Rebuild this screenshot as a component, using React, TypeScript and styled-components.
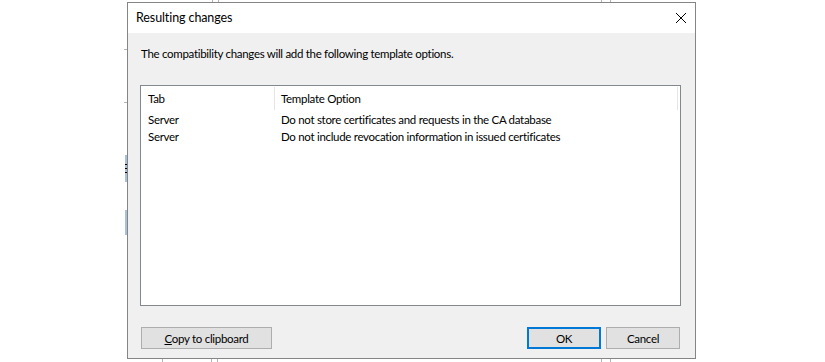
import styled, { createGlobalStyle } from "styled-components";

const GlobalStyle = createGlobalStyle`
  html, body {
    margin: 0;
    padding: 0;
    background: #fff;
  }
  body {
    font-family: Lato, "Liberation Sans", sans-serif;
    font-size: 11.5px;
    letter-spacing: -0.3px;
    color: #000;
  }
`;

interface Row {
  tab: string;
  option: string;
}

const rows: Row[] = [
  { tab: "Server", option: "Do not store certificates and requests in the CA database" },
  { tab: "Server", option: "Do not include revocation information in issued certificates" },
];

// bits of the window that sits behind the dialog
function Backdrop() {
  return (
    <BackdropSvg width="825" height="362" viewBox="0 0 825 362">
      <g stroke="#b4b4b4" strokeWidth="1">
        <line x1="212.5" y1="0" x2="212.5" y2="3" />
        <line x1="218.5" y1="0" x2="218.5" y2="3" />
        <line x1="601.5" y1="0" x2="601.5" y2="3" />
        <line x1="610.5" y1="0" x2="610.5" y2="3" />
        <line x1="162.5" y1="358" x2="162.5" y2="362" />
        <line x1="211.5" y1="358" x2="211.5" y2="362" />
        <line x1="217.5" y1="358" x2="217.5" y2="362" />
        <line x1="601.5" y1="358" x2="601.5" y2="362" />
        <line x1="610.5" y1="358" x2="610.5" y2="362" />
        <line x1="124" y1="49.5" x2="127" y2="49.5" />
        <line x1="124" y1="102.5" x2="127" y2="102.5" />
      </g>
      <rect x="125" y="155" width="2" height="27" fill="#a7c0dc" />
      <rect x="125" y="210" width="2" height="25" fill="#a7c0dc" />
      <g stroke="#000" strokeWidth="1">
        <line x1="125" y1="164.5" x2="127" y2="164.5" />
        <line x1="125" y1="168.5" x2="127" y2="168.5" />
        <line x1="125" y1="172.5" x2="127" y2="172.5" />
      </g>
    </BackdropSvg>
  );
}

function CloseIcon() {
  return (
    <svg width="12" height="12" viewBox="0 0 12 12">
      <path d="M1 1 L11 11 M11 1 L1 11" stroke="#000" strokeWidth="1" fill="none" />
    </svg>
  );
}

export default function App() {
  return (
    <>
      <GlobalStyle />
      <Desktop>
        <Backdrop />
        <Dialog>
          <TitleBar>
            <Title>Resulting changes</Title>
            <CloseButton>
              <CloseIcon />
            </CloseButton>
          </TitleBar>
          <Body>
            <Message>The compatibility changes will add the following template options.</Message>
            <ListView>
              <HeaderRow>
                <HeaderCell $divider>Tab</HeaderCell>
                <HeaderCell $divider>Template Option</HeaderCell>
              </HeaderRow>
              {rows.map((row, i) => (
                <ItemRow key={i}>
                  <Cell>{row.tab}</Cell>
                  <Cell>{row.option}</Cell>
                </ItemRow>
              ))}
            </ListView>
            <Footer>
              <Button $wide>
                <u>C</u>opy to clipboard
              </Button>
              <ButtonGroup>
                <Button $default>OK</Button>
                <Button>Cancel</Button>
              </ButtonGroup>
            </Footer>
          </Body>
        </Dialog>
      </Desktop>
    </>
  );
}

const Desktop = styled.div`
  position: relative;
  width: 825px;
  height: 362px;
  overflow: hidden;
  background: #fff;
`;

const BackdropSvg = styled.svg`
  position: absolute;
  left: 0;
  top: 0;
`;

const Dialog = styled.div`
  position: absolute;
  left: 127px;
  top: 2px;
  width: 567px;
  height: 355px;
  border: 1px solid #858585;
  display: flex;
  flex-direction: column;
  background: #f0f0f0;
`;

const TitleBar = styled.div`
  height: 30px;
  background: #fff;
  display: flex;
  align-items: center;
  justify-content: space-between;
  padding-left: 8px;
`;

const Title = styled.span`
  font-size: 12.5px;
  letter-spacing: -0.1px;
  line-height: 16px;
  margin-top: -1px;
`;

const CloseButton = styled.div`
  width: 28px;
  height: 30px;
  display: flex;
  align-items: center;
  justify-content: center;
`;

const Body = styled.div`
  flex: 1;
  display: flex;
  flex-direction: column;
  padding: 13px 14px 9px 12px;
`;

const Message = styled.div`
  line-height: 16px;
  height: 16px;
  padding-left: 1px;
  margin-bottom: 23px;
`;

const ListView = styled.div`
  height: 219px;
  background: #fff;
  border: 1px solid #828790;
  margin-bottom: 21px;
`;

const HeaderRow = styled.div`
  display: grid;
  grid-template-columns: 134px 403px;
  height: 25px;
`;

const HeaderCell = styled.div<{ $divider?: boolean }>`
  display: flex;
  align-items: center;
  padding-left: 7px;
  margin: 1px 0 1px;
  border-right: ${(p) => (p.$divider ? "1px solid #e5e5e5" : "none")};
  & + & {
    padding-left: 6px;
  }
`;

const ItemRow = styled.div`
  display: grid;
  grid-template-columns: 134px 403px;
  height: 17px;
  align-items: center;
`;

const Cell = styled.div`
  padding-left: 7px;
  white-space: nowrap;
  & + & {
    padding-left: 6px;
  }
`;

const Footer = styled.div`
  display: flex;
  justify-content: space-between;
  padding: 0 1px;
`;

const ButtonGroup = styled.div`
  display: flex;
  gap: 5px;
`;

const Button = styled.div<{ $wide?: boolean; $default?: boolean }>`
  box-sizing: border-box;
  width: ${(p) => (p.$wide ? "131px" : "74px")};
  height: 22px;
  display: flex;
  align-items: center;
  justify-content: center;
  background: #e1e1e1;
  border: ${(p) => (p.$default ? "2px solid #0078d7" : "1px solid #adadad")};
  u {
    text-decoration: underline;
  }
`;
